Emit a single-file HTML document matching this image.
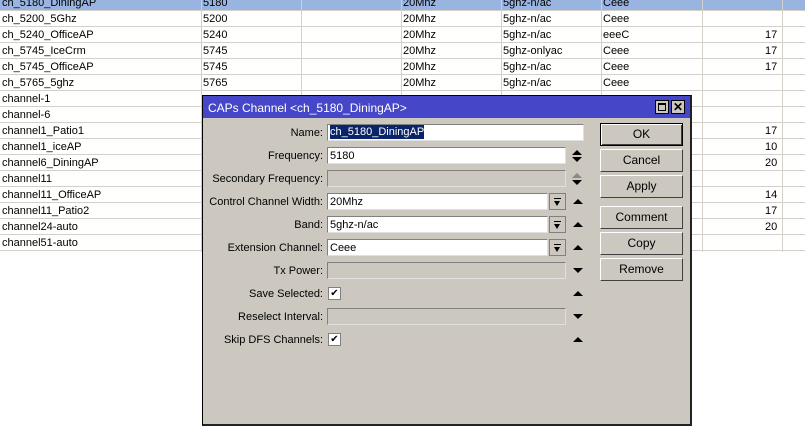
<!DOCTYPE html>
<html><head><style>
*{margin:0;padding:0;box-sizing:border-box}
body{width:805px;height:426px;overflow:hidden;background:#fff;font-family:"Liberation Sans",sans-serif;font-size:11px;position:relative}
.a{position:absolute}
.row{position:absolute;left:0;width:805px;height:16px;border-bottom:1px solid #d4d0c8}
.row span{position:absolute;top:2px;white-space:nowrap}
.vl{position:absolute;top:0;width:1px;height:252px;background:#d4d0c8}
.dlg{position:absolute;left:202px;top:95px;width:490px;height:331px;background:#ccc8c0;border:1px solid #000;border-right:2px solid #222;border-bottom:2px solid #222}
.title{position:absolute;left:0;top:0;width:100%;height:22px;background:#4646c8;color:#fff;padding:5px 0 0 5px;font-size:12px}
.lbl{position:absolute;right:367px;text-align:right;white-space:nowrap}
.in{position:absolute;left:124px;height:17px;background:#fff;border:1px solid #808080;border-right-color:#e0e0e0;border-bottom-color:#e0e0e0;padding:2px 2px;white-space:nowrap}
.dis{background:#ccc8c0}
.dd{position:absolute;left:346px;width:17px;height:17px;border:1px solid #808080;background:#ccc8c0}
.dd:before{content:"";position:absolute;left:4px;top:4px;width:7px;height:1px;background:#000}
.dd:after{content:"";position:absolute;left:4px;top:7px;border-left:3.5px solid transparent;border-right:3.5px solid transparent;border-top:5px solid #000}
.btn{position:absolute;left:397px;width:83px;height:23px;border:1px solid #fff;border-right-color:#404040;border-bottom-color:#404040;text-align:center;line-height:21px;background:#ccc8c0;font-size:12px}
.cb{position:absolute;left:125px;width:13px;height:13px;background:#fff;border:1px solid #808080;font-size:10px;line-height:11px;text-align:center}
.up,.dn{position:absolute;left:370px;width:0;height:0;border-left:5px solid transparent;border-right:5px solid transparent}
.up{border-bottom:5px solid #000}
.dn{border-top:5px solid #000}
</style></head><body>
<div class="row" style="top:-5px;background:#99b4e0"><span style="left:2px">ch_5180_DiningAP</span><span style="left:203px">5180</span><span style="left:403px">20Mhz</span><span style="left:503px">5ghz-n/ac</span><span style="left:603px">Ceee</span></div>
<div class="row" style="top:11px"><span style="left:2px">ch_5200_5Ghz</span><span style="left:203px">5200</span><span style="left:403px">20Mhz</span><span style="left:503px">5ghz-n/ac</span><span style="left:603px">Ceee</span></div>
<div class="row" style="top:27px"><span style="left:2px">ch_5240_OfficeAP</span><span style="left:203px">5240</span><span style="left:403px">20Mhz</span><span style="left:503px">5ghz-n/ac</span><span style="left:603px">eeeC</span><span style="left:765px">17</span></div>
<div class="row" style="top:43px"><span style="left:2px">ch_5745_IceCrm</span><span style="left:203px">5745</span><span style="left:403px">20Mhz</span><span style="left:503px">5ghz-onlyac</span><span style="left:603px">Ceee</span><span style="left:765px">17</span></div>
<div class="row" style="top:59px"><span style="left:2px">ch_5745_OfficeAP</span><span style="left:203px">5745</span><span style="left:403px">20Mhz</span><span style="left:503px">5ghz-n/ac</span><span style="left:603px">Ceee</span><span style="left:765px">17</span></div>
<div class="row" style="top:75px"><span style="left:2px">ch_5765_5ghz</span><span style="left:203px">5765</span><span style="left:403px">20Mhz</span><span style="left:503px">5ghz-n/ac</span><span style="left:603px">Ceee</span></div>
<div class="row" style="top:91px"><span style="left:2px">channel-1</span></div>
<div class="row" style="top:107px"><span style="left:2px">channel-6</span></div>
<div class="row" style="top:123px"><span style="left:2px">channel1_Patio1</span><span style="left:765px">17</span></div>
<div class="row" style="top:139px"><span style="left:2px">channel1_iceAP</span><span style="left:765px">10</span></div>
<div class="row" style="top:155px"><span style="left:2px">channel6_DiningAP</span><span style="left:765px">20</span></div>
<div class="row" style="top:171px"><span style="left:2px">channel11</span></div>
<div class="row" style="top:187px"><span style="left:2px">channel11_OfficeAP</span><span style="left:765px">14</span></div>
<div class="row" style="top:203px"><span style="left:2px">channel11_Patio2</span><span style="left:765px">17</span></div>
<div class="row" style="top:219px"><span style="left:2px">channel24-auto</span><span style="left:765px">20</span></div>
<div class="row" style="top:235px"><span style="left:2px">channel51-auto</span></div>
<div class="vl" style="left:201px"></div><div class="vl" style="left:301px"></div><div class="vl" style="left:401px"></div><div class="vl" style="left:501px"></div><div class="vl" style="left:601px"></div><div class="vl" style="left:702px"></div><div class="vl" style="left:782px"></div>

<div class="dlg">
<div class="title">CAPs Channel &lt;ch_5180_DiningAP&gt;</div>
<div class="a" style="left:452px;top:4px;width:14px;height:14px;background:#ccc8c0;border:1px solid #000"><div class="a" style="left:2px;top:2px;width:8px;height:8px;border:1px solid #000;border-top-width:2px"></div></div>
<div class="a" style="left:468px;top:4px;width:14px;height:14px;background:#ccc8c0;border:1px solid #000;font-size:12px;font-weight:bold;line-height:12px;text-align:center">✕</div>

<div class="lbl" style="top:31px">Name:</div><div class="in" style="top:28px;width:257px;padding-top:1px"><span style="background:#0a246a;color:#fff;padding:1px 0">ch_5180_DiningAP</span></div>
<div class="lbl" style="top:54px">Frequency:</div><div class="in" style="top:51px;width:239px">5180</div>
<div class="up" style="top:54px;left:369px"></div><div class="dn" style="top:61px;left:369px"></div>
<div class="lbl" style="top:77px">Secondary Frequency:</div><div class="in dis" style="top:74px;width:239px"></div>
<div class="up" style="top:77px;left:369px;border-bottom-color:#888"></div><div class="dn" style="top:84px;left:369px"></div>
<div class="lbl" style="top:100px">Control Channel Width:</div><div class="in" style="top:97px;width:221px">20Mhz</div><div class="dd" style="top:97px"></div><div class="up" style="top:103px"></div>
<div class="lbl" style="top:123px">Band:</div><div class="in" style="top:120px;width:221px">5ghz-n/ac</div><div class="dd" style="top:120px"></div><div class="up" style="top:126px"></div>
<div class="lbl" style="top:146px">Extension Channel:</div><div class="in" style="top:143px;width:221px">Ceee</div><div class="dd" style="top:143px"></div><div class="up" style="top:149px"></div>
<div class="lbl" style="top:169px">Tx Power:</div><div class="in dis" style="top:166px;width:239px"></div><div class="dn" style="top:172px"></div>
<div class="lbl" style="top:192px">Save Selected:</div><div class="cb" style="top:191px">✔</div><div class="up" style="top:195px"></div>
<div class="lbl" style="top:215px">Reselect Interval:</div><div class="in dis" style="top:212px;width:239px"></div><div class="dn" style="top:218px"></div>
<div class="lbl" style="top:238px">Skip DFS Channels:</div><div class="cb" style="top:237px">✔</div><div class="up" style="top:241px"></div>

<div class="btn" style="top:27px;border:1px solid #000;box-shadow:inset 1px 1px #fff,inset -1px -1px #404040">OK</div>
<div class="btn" style="top:53px">Cancel</div>
<div class="btn" style="top:79px">Apply</div>
<div class="btn" style="top:110px">Comment</div>
<div class="btn" style="top:136px">Copy</div>
<div class="btn" style="top:162px">Remove</div>
</div>
</body></html>
